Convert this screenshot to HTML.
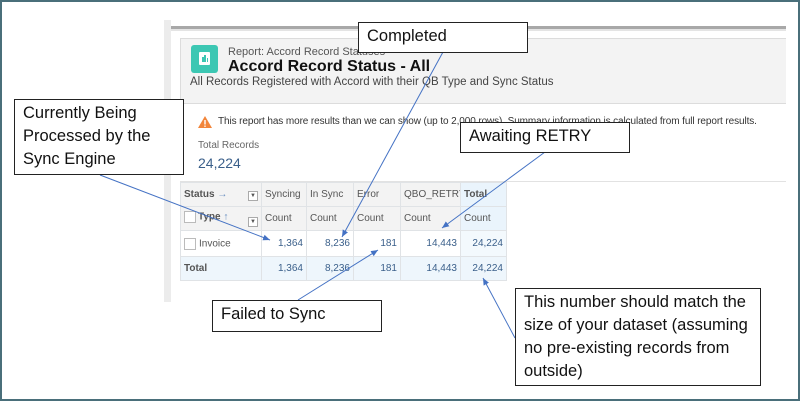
<!DOCTYPE html>
<html><head><style>
*{margin:0;padding:0;box-sizing:border-box}
body{width:800px;height:401px;overflow:hidden;background:#fff;font-family:"Liberation Sans",sans-serif;position:relative}
.frame{position:absolute;left:0;top:0;width:800px;height:401px;border:2px solid #4a6f7a}
.abs{position:absolute}
.box{position:absolute;background:#fff;border:1.5px solid #222;font-size:16.5px;color:#111;line-height:23px;padding:2px 8px}
table{border-collapse:collapse;font-size:10px;color:#555;table-layout:fixed}
td{border:1px solid #e0e3e6;padding:0 3px;height:24px;white-space:nowrap;overflow:hidden}
</style></head><body>
<div class="abs" style="left:164px;top:20px;width:7px;height:282px;background:#ececec"></div>
<div class="abs" style="left:171px;top:26px;width:615px;height:3px;background:#a8a8a8"></div>
<div class="abs" style="left:171px;top:29px;width:615px;height:2px;background:#e4e4e4"></div>
<div class="abs" style="left:180px;top:38px;width:606px;height:66px;background:#f3f3f3;border:1px solid #dcdcdc;border-right:none"></div>
<div class="abs" style="left:191px;top:45px;width:27px;height:28px;background:#3cc7b3;border-radius:3px"></div>
<div class="abs" style="left:199px;top:52px;width:11px;height:13px;background:#fff;border-radius:1px"></div>
<div class="abs" style="left:202px;top:57px;width:1.5px;height:5px;background:#3cc7b3"></div>
<div class="abs" style="left:204px;top:55px;width:1.5px;height:7px;background:#3cc7b3"></div>
<div class="abs" style="left:206.5px;top:58px;width:1.5px;height:4px;background:#3cc7b3"></div>
<div class="abs" style="left:228px;top:46px;font-size:11px;color:#555">Report: Accord Record Statuses</div>
<div class="abs" style="left:228px;top:58px;font-size:16px;font-weight:bold;color:#111">Accord Record Status - All</div>
<div class="abs" style="left:190px;top:76px;font-size:11.5px;color:#444">All Records Registered with Accord with their QB Type and Sync Status</div>
<svg class="abs" style="left:198px;top:116px" width="14" height="12"><path d="M7 0 L14 12 L0 12 Z" fill="#f2853a"/><rect x="6.3" y="4" width="1.4" height="4.5" fill="#fff"/><rect x="6.3" y="9.5" width="1.4" height="1.4" fill="#fff"/></svg>
<div class="abs" style="left:218px;top:116px;font-size:10px;color:#333;letter-spacing:-0.1px">This report has more results than we can show (up to 2,000 rows). Summary information is calculated from full report results.</div>
<div class="abs" style="left:198px;top:140px;font-size:10px;color:#666">Total Records</div>
<div class="abs" style="left:198px;top:155px;font-size:14px;color:#3a5f8a">24,224</div>
<div class="abs" style="left:180px;top:181px;width:606px;height:1px;background:#e2e2e2"></div>
<table class="abs" style="left:180px;top:182px;width:326px">
<colgroup><col style="width:81px"><col style="width:45px"><col style="width:47px"><col style="width:47px"><col style="width:60px"><col style="width:46px"></colgroup>
<tr style="background:#f3f3f3"><td style="font-weight:bold">Status <span style="color:#6a8fc0">→</span><span style="float:right;display:inline-block;width:10px;height:10px;border:1px solid #aaa;background:#fff;margin-top:2px;font-size:6px;text-align:center;line-height:9px;color:#555">▼</span></td><td>Syncing</td><td>In Sync</td><td>Error</td><td>QBO_RETRY</td><td style="background:#eaf4fc;font-weight:bold">Total</td></tr>
<tr style="background:#f3f3f3"><td style="font-weight:bold"><span style="display:inline-block;width:12px;height:12px;border:1px solid #bbb;background:#fff;vertical-align:middle;margin-right:2px"></span>Type <span style="color:#6a8fc0">↑</span><span style="float:right;display:inline-block;width:10px;height:10px;border:1px solid #aaa;background:#fff;margin-top:6px;font-size:6px;text-align:center;line-height:9px;color:#555">▼</span></td><td>Count</td><td>Count</td><td>Count</td><td>Count</td><td style="background:#eaf4fc">Count</td></tr>
<tr style="height:26px"><td><span style="display:inline-block;width:12px;height:12px;border:1px solid #bbb;vertical-align:middle;margin-right:3px"></span>Invoice</td><td style="text-align:right;color:#3a5f8a">1,364</td><td style="text-align:right;color:#3a5f8a">8,236</td><td style="text-align:right;color:#3a5f8a">181</td><td style="text-align:right;color:#3a5f8a">14,443</td><td style="text-align:right;color:#3a5f8a;background:#f3f9fd">24,224</td></tr>
<tr style="background:#eef6fc"><td style="font-weight:bold">Total</td><td style="text-align:right;color:#3a5f8a">1,364</td><td style="text-align:right;color:#3a5f8a">8,236</td><td style="text-align:right;color:#3a5f8a">181</td><td style="text-align:right;color:#3a5f8a">14,443</td><td style="text-align:right;color:#3a5f8a">24,224</td></tr>
</table>
<svg class="abs" style="left:0;top:0" width="800" height="401">
<defs><marker id="a" markerWidth="8" markerHeight="8" refX="7" refY="4" orient="auto"><path d="M0 1 L7 4 L0 7 Z" fill="#4472c4"/></marker></defs>
<g stroke="#4472c4" stroke-width="1" marker-end="url(#a)">
<line x1="100" y1="175" x2="270" y2="240"/>
<line x1="443" y1="52" x2="342" y2="237"/>
<line x1="545" y1="152" x2="442" y2="228"/>
<line x1="298" y1="300" x2="378" y2="250"/>
<line x1="515" y1="338" x2="483" y2="278"/>
</g></svg>
<div class="box" style="left:14px;top:99px;width:170px;height:76px">Currently Being<br>Processed by the<br>Sync Engine</div>
<div class="box" style="left:358px;top:22px;width:170px;height:31px">Completed</div>
<div class="box" style="left:460px;top:122px;width:170px;height:31px">Awaiting RETRY</div>
<div class="box" style="left:212px;top:300px;width:170px;height:32px">Failed to Sync</div>
<div class="box" style="left:515px;top:288px;width:246px;height:98px">This number should match the size of your dataset (assuming no pre-existing records from outside)</div>
<div class="frame"></div>
</body></html>
